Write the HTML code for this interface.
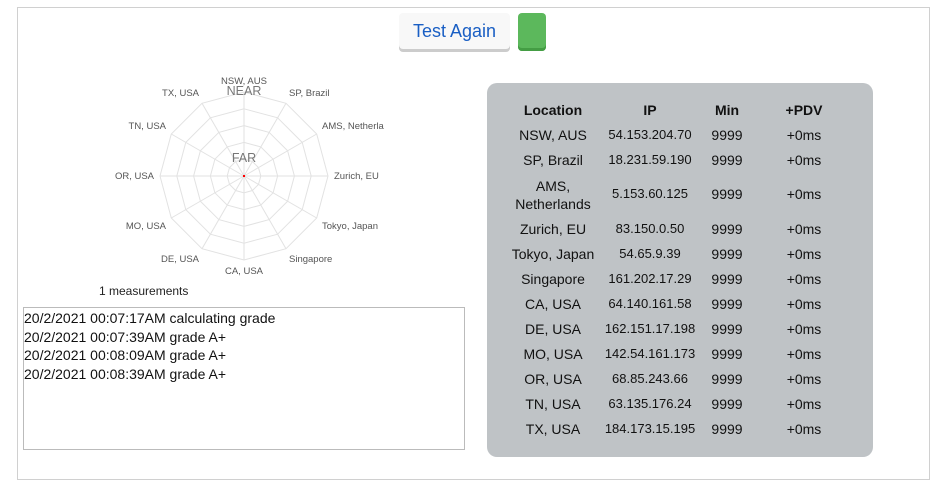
<!DOCTYPE html>
<html><head><meta charset="utf-8"><style>
body{margin:0;width:936px;height:494px;background:#fff;font-family:"Liberation Sans",Arial,sans-serif;position:relative;overflow:hidden}
.frame{position:absolute;left:17px;top:7px;width:911px;height:471px;border:1px solid #d0d0d0}
.btn{position:absolute;left:399px;top:13px;width:111px;height:36px;background:#f8f8f8;border-radius:4px;box-shadow:0 3px 0 #ccc;color:#1a5fc4;font-size:18px;line-height:36px;text-align:center}
.grn{position:absolute;left:518px;top:13px;width:28px;height:38px;background:#5cb85c;border-radius:4px;box-shadow:inset 0 -3px 0 #449d44}
.meas{position:absolute;left:99px;top:284px;font-size:12px;color:#222}
.log{position:absolute;left:23px;top:307px;width:440px;height:140px;border:1px solid #bbb;font-size:14px;line-height:18.7px;padding:1px 0 0 0;color:#111}
.tbl{position:absolute;left:487px;top:83px;width:386px;height:374px;background:#bfc3c6;border-radius:10px}
.r{position:absolute;font-size:14px;color:#111;text-align:center;transform:translateX(-50%);white-space:nowrap}
.ip{font-size:13px}
.h{font-weight:bold}
</style></head><body>
<div class="frame"></div>
<div class="btn">Test Again</div>
<div class="grn"></div>
<svg id="rad" style="position:absolute;left:0;top:0" width="936" height="300">
<g id="grid" stroke="#e2e2e2" stroke-width="1" fill="none"></g>
<rect x="243" y="175" width="2" height="2" fill="red"/>
<g font-size="9.5" fill="#555" font-family="Liberation Sans,Arial,sans-serif">
<text x="244" y="84" text-anchor="middle">NSW, AUS</text>
<text x="199" y="96" text-anchor="end">TX, USA</text>
<text x="289" y="96">SP, Brazil</text>
<text x="166" y="129" text-anchor="end">TN, USA</text>
<text x="322" y="129">AMS, Netherla</text>
<text x="154" y="179" text-anchor="end">OR, USA</text>
<text x="334" y="179">Zurich, EU</text>
<text x="166" y="229" text-anchor="end">MO, USA</text>
<text x="322" y="229">Tokyo, Japan</text>
<text x="199" y="262" text-anchor="end">DE, USA</text>
<text x="289" y="262">Singapore</text>
<text x="244" y="274" text-anchor="middle">CA, USA</text>
</g>
<text x="244" y="95" text-anchor="middle" font-size="12.5" fill="#777" font-family="Liberation Sans,Arial,sans-serif">NEAR</text>
<text x="244" y="162" text-anchor="middle" font-size="12.5" fill="#777" font-family="Liberation Sans,Arial,sans-serif">FAR</text>
</svg>
<script>
(function(){var g=document.getElementById('grid'),cx=244,cy=176,R=84,s='';
for(var k=1;k<=5;k++){var r=R*k/5,p=[];for(var i=0;i<12;i++){var a=i*Math.PI/6;p.push((cx+r*Math.sin(a)).toFixed(1)+','+(cy-r*Math.cos(a)).toFixed(1));}s+='<polygon points="'+p.join(' ')+'"/>';}
for(var i=0;i<12;i++){var a=i*Math.PI/6;s+='<line x1="'+cx+'" y1="'+cy+'" x2="'+(cx+R*Math.sin(a)).toFixed(1)+'" y2="'+(cy-R*Math.cos(a)).toFixed(1)+'"/>';}
g.innerHTML=s;})();
</script>
<div class="meas">1 measurements</div>
<div class="log">20/2/2021 00:07:17AM calculating grade<br>20/2/2021 00:07:39AM grade A+<br>20/2/2021 00:08:09AM grade A+<br>20/2/2021 00:08:39AM grade A+</div>
<div class="tbl"></div>
<div class="r h" style="left:553px;top:102px">Location</div>
<div class="r h" style="left:650px;top:102px">IP</div>
<div class="r h" style="left:727px;top:102px">Min</div>
<div class="r h" style="left:804px;top:102px">+PDV</div>

<div class="r" style="left:553px;top:127px">NSW, AUS</div><div class="r ip" style="left:650px;top:127px">54.153.204.70</div><div class="r" style="left:727px;top:127px">9999</div><div class="r" style="left:804px;top:127px">+0ms</div>
<div class="r" style="left:553px;top:152px">SP, Brazil</div><div class="r ip" style="left:650px;top:152px">18.231.59.190</div><div class="r" style="left:727px;top:152px">9999</div><div class="r" style="left:804px;top:152px">+0ms</div>
<div class="r" style="left:553px;top:177px;line-height:18px">AMS,<br>Netherlands</div><div class="r ip" style="left:650px;top:186px">5.153.60.125</div><div class="r" style="left:727px;top:186px">9999</div><div class="r" style="left:804px;top:186px">+0ms</div>
<div class="r" style="left:553px;top:221px">Zurich, EU</div><div class="r ip" style="left:650px;top:221px">83.150.0.50</div><div class="r" style="left:727px;top:221px">9999</div><div class="r" style="left:804px;top:221px">+0ms</div>
<div class="r" style="left:553px;top:246px">Tokyo, Japan</div><div class="r ip" style="left:650px;top:246px">54.65.9.39</div><div class="r" style="left:727px;top:246px">9999</div><div class="r" style="left:804px;top:246px">+0ms</div>
<div class="r" style="left:553px;top:271px">Singapore</div><div class="r ip" style="left:650px;top:271px">161.202.17.29</div><div class="r" style="left:727px;top:271px">9999</div><div class="r" style="left:804px;top:271px">+0ms</div>
<div class="r" style="left:553px;top:296px">CA, USA</div><div class="r ip" style="left:650px;top:296px">64.140.161.58</div><div class="r" style="left:727px;top:296px">9999</div><div class="r" style="left:804px;top:296px">+0ms</div>
<div class="r" style="left:553px;top:321px">DE, USA</div><div class="r ip" style="left:650px;top:321px">162.151.17.198</div><div class="r" style="left:727px;top:321px">9999</div><div class="r" style="left:804px;top:321px">+0ms</div>
<div class="r" style="left:553px;top:346px">MO, USA</div><div class="r ip" style="left:650px;top:346px">142.54.161.173</div><div class="r" style="left:727px;top:346px">9999</div><div class="r" style="left:804px;top:346px">+0ms</div>
<div class="r" style="left:553px;top:371px">OR, USA</div><div class="r ip" style="left:650px;top:371px">68.85.243.66</div><div class="r" style="left:727px;top:371px">9999</div><div class="r" style="left:804px;top:371px">+0ms</div>
<div class="r" style="left:553px;top:396px">TN, USA</div><div class="r ip" style="left:650px;top:396px">63.135.176.24</div><div class="r" style="left:727px;top:396px">9999</div><div class="r" style="left:804px;top:396px">+0ms</div>
<div class="r" style="left:553px;top:421px">TX, USA</div><div class="r ip" style="left:650px;top:421px">184.173.15.195</div><div class="r" style="left:727px;top:421px">9999</div><div class="r" style="left:804px;top:421px">+0ms</div>
</body></html>
